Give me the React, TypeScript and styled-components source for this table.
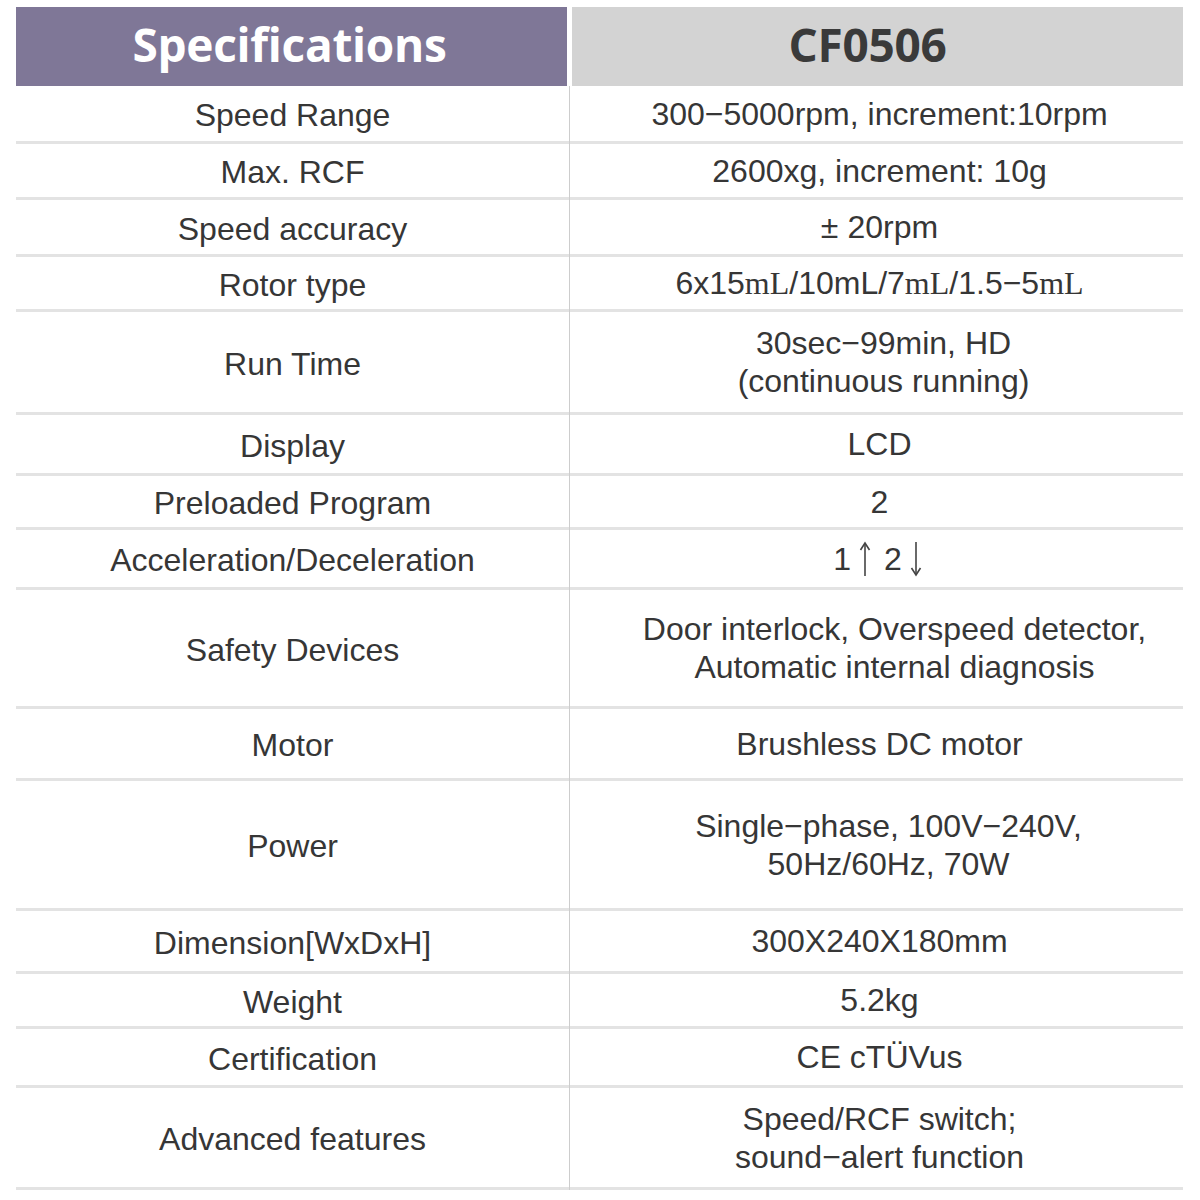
import React from 'react';
import styled, { createGlobalStyle } from 'styled-components';

const GlobalStyle = createGlobalStyle`
  body {
    margin: 0;
    background: #ffffff;
    font-family: 'Liberation Sans', Arial, sans-serif;
  }
`;

const Table = styled.div`
  width: 1167px;
  margin: 7px 0 0 16px;
`;

const HeaderRow = styled.div`
  display: grid;
  grid-template-columns: 554px 1fr;
  height: 79px;
`;

const HeaderCell = styled.div<{ $tone: 'purple' | 'gray' }>`
  display: flex;
  align-items: center;
  justify-content: center;
  font-family: 'Open Sans', 'Noto Sans', sans-serif;
  font-weight: 700;
  font-size: 46px;
  letter-spacing: -0.3px;
  padding-bottom: 6px;
  box-sizing: border-box;
  background: ${({ $tone }) => ($tone === 'purple' ? '#7f7797' : '#d3d3d3')};
  color: ${({ $tone }) => ($tone === 'purple' ? '#ffffff' : '#3a3a3a')};
  margin: ${({ $tone }) => ($tone === 'purple' ? '0 3px 0 0' : '0 0 0 2px')};
  padding-right: ${({ $tone }) => ($tone === 'purple' ? '4px' : '20px')};
`;

const Row = styled.div<{ $h: number }>`
  display: grid;
  grid-template-columns: 554px 1fr;
  height: ${({ $h }) => $h}px;
  box-sizing: border-box;
  border-bottom: 3px solid #e3e3e3;
`;

const Label = styled.div`
  display: flex;
  align-items: center;
  justify-content: center;
  border-right: 1px solid #cdcdcd;
  font-size: 32px;
  color: #363636;
  text-align: center;
  line-height: 38px;
  margin-bottom: -3px;
`;

const Value = styled.div<{ $shift?: number }>`
  display: flex;
  align-items: center;
  justify-content: center;
  font-size: 32px;
  color: #363636;
  text-align: center;
  line-height: 38px;
  padding-left: ${({ $shift = 0 }) => 6 + $shift}px;
`;

const Serif = styled.span`
  font-family: 'Liberation Serif', 'Times New Roman', serif;
`;

const ArrowIcon = styled.svg`
  width: 12px;
  height: 36px;
  margin: 0 4px 0 8px;
  vertical-align: -7px;
`;

const Arrow = ({ down }: { down?: boolean }) => (
  <ArrowIcon viewBox="0 0 12 36" fill="none" stroke="#444" strokeWidth="1.6">
    {down ? (
      <>
        <path d="M6 1v33" />
        <path d="M1.5 27l4.5 7 4.5-7" />
      </>
    ) : (
      <>
        <path d="M6 35V2" />
        <path d="M1.5 9L6 2l4.5 7" />
      </>
    )}
  </ArrowIcon>
);

const rows: { label: string; value: React.ReactNode; h: number; shift?: number }[] = [
  { label: 'Speed Range', value: '300−5000rpm, increment:10rpm', h: 58 },
  { label: 'Max. RCF', value: '2600xg, increment: 10g', h: 56 },
  { label: 'Speed accuracy', value: '±\u2009\u200a20rpm', h: 57 },
  {
    label: 'Rotor type',
    value: (
      <>
        6x15<Serif>mL</Serif>/10mL/7<Serif>mL</Serif>/1.5−5<Serif>mL</Serif>
      </>
    ),
    h: 55,
  },
  {
    label: 'Run Time',
    value: (
      <>
        30sec−99min, HD
        <br />
        (continuous running)
      </>
    ),
    h: 103,
    shift: 8,
  },
  { label: 'Display', value: 'LCD', h: 61 },
  { label: 'Preloaded Program', value: '2', h: 54 },
  {
    label: 'Acceleration/Deceleration',
    value: (
      <span>
        1<Arrow /> 2<Arrow down />
      </span>
    ),
    h: 60,
  },
  {
    label: 'Safety Devices',
    value: (
      <>
        Door interlock, Overspeed detector,
        <br />
        Automatic internal diagnosis
      </>
    ),
    h: 119,
    shift: 30,
  },
  { label: 'Motor', value: 'Brushless DC motor', h: 72 },
  {
    label: 'Power',
    value: (
      <>
        Single−phase, 100V−240V,
        <br />
        50Hz/60Hz, 70W
      </>
    ),
    h: 130,
    shift: 18,
  },
  { label: 'Dimension[WxDxH]', value: '300X240X180mm', h: 63 },
  { label: 'Weight', value: '5.2kg', h: 55 },
  { label: 'Certification', value: 'CE cTÜVus', h: 59 },
  {
    label: 'Advanced features',
    value: (
      <>
        Speed/RCF switch;
        <br />
        sound−alert function
      </>
    ),
    h: 102,
  },
];

const App = () => {
  return (
    <>
      <GlobalStyle />
      <Table>
        <HeaderRow>
          <HeaderCell $tone="purple">Specifications</HeaderCell>
          <HeaderCell $tone="gray">CF0506</HeaderCell>
        </HeaderRow>
        {rows.map((r) => (
          <Row key={r.label} $h={r.h}>
            <Label>{r.label}</Label>
            <Value $shift={r.shift}>{r.value}</Value>
          </Row>
        ))}
      </Table>
    </>
  );
};

export default App;
